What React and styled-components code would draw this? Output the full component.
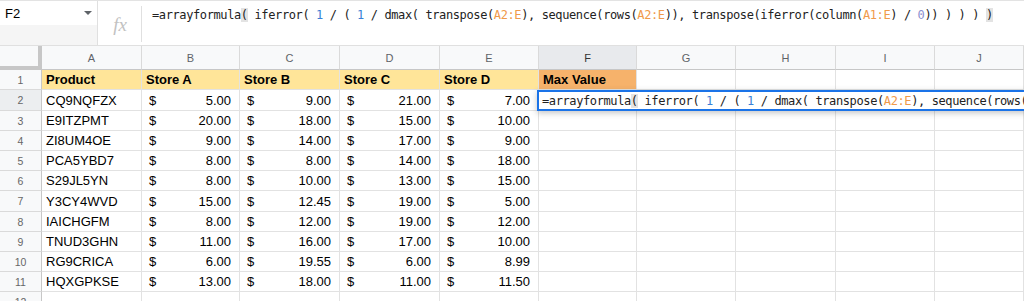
import React from 'react';
import styled, { createGlobalStyle } from 'styled-components';

const GlobalStyle = createGlobalStyle`
  html, body {
    margin: 0;
    padding: 0;
    background: #ffffff;
    overflow: hidden;
  }
  body {
    font-family: Arial, "Liberation Sans", sans-serif;
  }
`;

const Page = styled.div`
  width: 1024px;
  height: 301px;
  overflow: hidden;
  background: #ffffff;
`;

const FormulaBar = styled.div`
  display: flex;
  height: 46px;
  border-top: 1px solid #e3e3e3;
  border-bottom: 1px solid #e0e0e0;
  box-sizing: border-box;
`;

const NameBoxArea = styled.div`
  width: 97px;
  display: flex;
  flex-direction: column;
  border-right: 1px solid #e0e0e0;
`;

const NameBox = styled.div`
  height: 24px;
  display: flex;
  align-items: center;
  justify-content: space-between;
  padding: 0 5px;
  background: #ffffff;
  font-size: 13px;
  color: #000;
`;

const NameBoxFill = styled.div`
  flex: 1;
  background: #f5f5f5;
`;

const Caret = styled.span`
  width: 0;
  height: 0;
  border-left: 4px solid transparent;
  border-right: 4px solid transparent;
  border-top: 4px solid #5f6368;
`;

const FxBox = styled.div`
  width: 44px;
  display: flex;
  align-items: center;
  justify-content: center;
  position: relative;
  &::after {
    content: '';
    position: absolute;
    right: 0;
    top: 5px;
    bottom: 3px;
    width: 1px;
    background: #e0e0e0;
  }
`;

const FxGlyph = styled.span`
  font-family: "Liberation Serif", "DejaVu Serif", serif;
  font-style: italic;
  font-size: 19px;
  color: #c2c2c2;
  margin-top: 4px;
`;

const FormulaText = styled.div`
  flex: 1;
  padding: 5px 0 0 10px;
  line-height: 16px;
  white-space: nowrap;
  overflow: hidden;
`;

const Mono = styled.span`
  font-family: "DejaVu Sans Mono", "Liberation Mono", monospace;
  font-size: 12px;
  letter-spacing: -0.39px;
  color: #222;
`;

const tokenColors = {
  num: '#3b7fd6',
  num2: '#8b90cf',
  ref: '#f09a4a',
};

const Tok = styled.span`
  color: ${(p) => tokenColors[p.$kind] || 'inherit'};
  background: ${(p) => (p.$kind === 'match' ? '#e3e3e3' : 'transparent')};
`;

const Grid = styled.div`
  display: grid;
  grid-template-columns: 42px 100px 98px 100px 100px 99px 98px 99px 100px 99px 89px;
  grid-template-rows: 24px 20px 21px 20px 20px 20px 20px 21px 20px 20px 20px 20px 20px;
`;

const Corner = styled.div`
  background: #f8f9fa;
  border-right: 4px solid #c7c7c7;
  border-bottom: 4px solid #c7c7c7;
  box-sizing: border-box;
`;

const ColHead = styled.div`
  display: flex;
  align-items: center;
  justify-content: center;
  background: ${(p) => (p.$selected ? '#e8eaed' : '#f8f9fa')};
  border-right: 1px solid #dadada;
  border-bottom: 1px solid #c7c7c7;
  font-size: 11px;
  color: ${(p) => (p.$selected ? '#333' : '#5f6368')};
  box-sizing: border-box;
  padding-top: 1px;
`;

const RowHead = styled.div`
  display: flex;
  align-items: center;
  justify-content: center;
  background: ${(p) => (p.$selected ? '#eceef0' : '#f8f9fa')};
  border-right: 1px solid #c7c7c7;
  border-bottom: 1px solid #dadada;
  font-size: 10.5px;
  color: #666;
  box-sizing: border-box;
`;

const Cell = styled.div`
  position: relative;
  display: flex;
  align-items: center;
  background: ${(p) => p.$bg || '#ffffff'};
  border-right: 1px solid #e2e2e2;
  border-bottom: 1px solid #e2e2e2;
  box-sizing: border-box;
  padding: 0 4px;
  font-size: 13px;
  font-weight: ${(p) => (p.$bold ? 700 : 400)};
  color: #000;
  white-space: nowrap;
`;

const Money = styled(Cell)`
  justify-content: space-between;
  padding: 0 8px 0 7px;
`;

const Editor = styled.div`
  position: absolute;
  left: -2px;
  top: 0;
  height: 21px;
  width: 520px;
  box-sizing: border-box;
  border: 2px solid #1a73e8;
  background: #ffffff;
  box-shadow: 0 2px 6px rgba(60, 64, 67, 0.3);
  z-index: 2;
  display: flex;
  align-items: center;
  padding-left: 3px;
  white-space: nowrap;
  overflow: hidden;
`;

const formula = [
  ['=arrayformula'],
  ['(', 'match'],
  [' iferror( '],
  ['1', 'num'],
  [' / ( '],
  ['1', 'num'],
  [' / dmax( transpose('],
  ['A2:E', 'ref'],
  ['), sequence(rows('],
  ['A2:E', 'ref'],
  [')), transpose(iferror(column('],
  ['A1:E', 'ref'],
  [') / '],
  ['0', 'num2'],
  [')) ) ) ) '],
  [')', 'match'],
];

const Formula = () => (
  <Mono>
    {formula.map(([text, kind], i) => (
      <Tok key={i} $kind={kind}>
        {text}
      </Tok>
    ))}
  </Mono>
);

const columns = ['A', 'B', 'C', 'D', 'E', 'F', 'G', 'H', 'I', 'J'];
const headers = ['Product', 'Store A', 'Store B', 'Store C', 'Store D'];
const data = [
  ['CQ9NQFZX', 5, 9, 21, 7],
  ['E9ITZPMT', 20, 18, 15, 10],
  ['ZI8UM4OE', 9, 14, 17, 9],
  ['PCA5YBD7', 8, 8, 14, 18],
  ['S29JL5YN', 8, 10, 13, 15],
  ['Y3CY4WVD', 15, 12.45, 19, 5],
  ['IAICHGFM', 8, 12, 19, 12],
  ['TNUD3GHN', 11, 16, 17, 10],
  ['RG9CRICA', 6, 19.55, 6, 8.99],
  ['HQXGPKSE', 13, 18, 11, 11.5],
];

const emptyCells = (from, keyBase) =>
  columns.slice(from).map((c) => <Cell key={keyBase + c} />);

const App = () => {
  return (
    <Page>
      <GlobalStyle />
      <FormulaBar>
        <NameBoxArea>
          <NameBox>
            F2
            <Caret />
          </NameBox>
          <NameBoxFill />
        </NameBoxArea>
        <FxBox>
          <FxGlyph>fx</FxGlyph>
        </FxBox>
        <FormulaText>
          <Formula />
        </FormulaText>
      </FormulaBar>
      <Grid>
        <Corner />
        {columns.map((c) => (
          <ColHead key={'h' + c} $selected={c === 'F'}>
            {c}
          </ColHead>
        ))}

        <RowHead>1</RowHead>
        {headers.map((h) => (
          <Cell key={h} $bg="#ffe599" $bold>
            {h}
          </Cell>
        ))}
        <Cell $bg="#f6b26b" $bold>
          Max Value
        </Cell>
        {emptyCells(6, 'r1')}

        {data.map((row, r) => (
          <React.Fragment key={row[0]}>
            <RowHead $selected={r === 0}>{r + 2}</RowHead>
            <Cell>{row[0]}</Cell>
            {row.slice(1).map((v, i) => (
              <Money key={i}>
                <span>$</span>
                <span>{v.toFixed(2)}</span>
              </Money>
            ))}
            {r === 0 ? (
              <Cell>
                <Editor>
                  <Formula />
                </Editor>
              </Cell>
            ) : (
              <Cell />
            )}
            {emptyCells(6, 'r' + r)}
          </React.Fragment>
        ))}

        <RowHead>12</RowHead>
        {emptyCells(0, 'r12')}
      </Grid>
    </Page>
  );
};

export default App;
